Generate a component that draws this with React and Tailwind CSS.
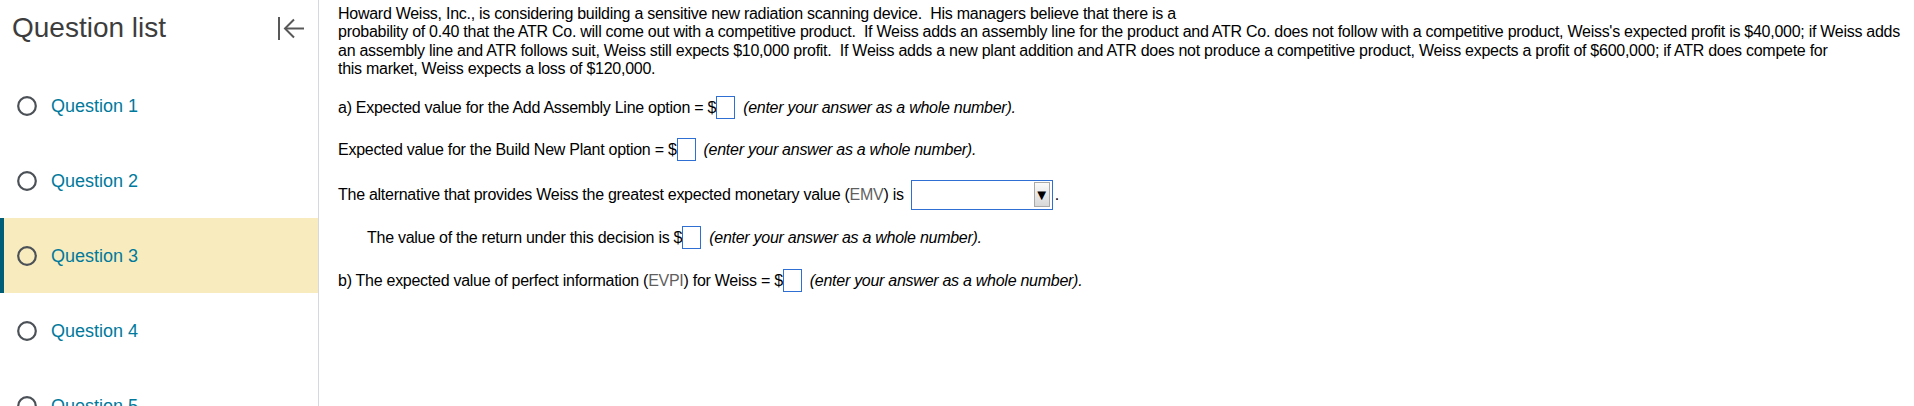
import React from "react";

const font = { fontFamily: '"Liberation Sans", Arial, sans-serif' };

function Circle() {
  return (
    <svg width="20" height="20" viewBox="0 0 20 20" className="shrink-0">
      <circle cx="10" cy="10" r="8.8" fill="none" stroke="#4b5157" strokeWidth="2.2" />
    </svg>
  );
}

function QItem({ label, active }) {
  return (
    <div
      className={
        "h-[75px] shrink-0 flex items-center pl-[17px] gap-[14px] relative " +
        (active ? "bg-[#f8ecbf]" : "")
      }
    >
      {active && <div className="absolute left-0 top-0 bottom-0 w-[4px] bg-[#005e78]" />}
      <Circle />
      <span className="text-[18px] text-[#00799c] leading-none">{label}</span>
    </div>
  );
}

function Box() {
  return <span className="inline-block w-[19px] h-[23px] border border-[#2f6ed3] bg-white shrink-0" />;
}

function Hint() {
  return <span className="italic ml-[8px]">(enter your answer as a whole number).</span>;
}

export default function App() {
  return (
    <div className="flex w-[1914px] h-[406px] overflow-hidden bg-white text-black" style={font}>
      <div className="w-[319px] shrink-0 border-r border-[#d3d9de] flex flex-col">
        <div className="h-[68px] shrink-0 flex items-start justify-between pl-[12px] pr-[13px] pt-[11px]">
          <span className="text-[28px] leading-[34px] text-[#3d3d3d]">Question list</span>
          <svg width="28" height="26" viewBox="0 0 28 26" className="mt-[5px]">
            <line x1="2" y1="1" x2="2" y2="24" stroke="#585858" strokeWidth="2" />
            <line x1="8" y1="12.5" x2="27" y2="12.5" stroke="#585858" strokeWidth="2" />
            <polyline points="17,3.5 8,12.5 17,21.5" fill="none" stroke="#585858" strokeWidth="2" />
          </svg>
        </div>
        <QItem label="Question 1" />
        <QItem label="Question 2" />
        <QItem label="Question 3" active />
        <QItem label="Question 4" />
        <QItem label="Question 5" />
      </div>
      <div className="flex-1 pl-[19px] pt-[5px] text-[16px] tracking-[-0.27px]">
        <div className="leading-[18.4px] whitespace-nowrap">
          <div>Howard Weiss, Inc., is considering building a sensitive new radiation scanning device.{"\u00a0 "}His managers believe that there is a</div>
          <div>probability of 0.40 that the ATR Co. will come out with a competitive product.{"\u00a0 "}If Weiss adds an assembly line for the product and ATR Co. does not follow with a competitive product, Weiss's expected profit is $40,000; if Weiss adds</div>
          <div>an assembly line and ATR follows suit, Weiss still expects $10,000 profit.{"\u00a0 "}If Weiss adds a new plant addition and ATR does not produce a competitive product, Weiss expects a profit of $600,000; if ATR does compete for</div>
          <div>this market, Weiss expects a loss of $120,000.</div>
        </div>

        <div className="mt-[17px] flex items-center whitespace-nowrap">
          <span>a) Expected value for the Add Assembly Line option = $</span>
          <Box />
          <Hint />
        </div>

        <div className="mt-[18px] flex items-center whitespace-nowrap">
          <span>Expected value for the Build New Plant option = $</span>
          <Box />
          <Hint />
        </div>

        <div className="mt-[18px] flex items-center whitespace-nowrap">
          <span>
            The alternative that provides Weiss the greatest expected monetary value (<span className="text-[#5f5f5f]">EMV</span>) is
          </span>
          <span className="ml-[7px] w-[142px] h-[30px] border border-[#2f6ed3] bg-white flex items-center justify-end pr-[2px]">
            <span className="w-[16px] h-[25px] border border-[#a9a9a9] bg-gradient-to-b from-[#fafafa] to-[#d8d8d8] flex items-center justify-center text-[15px] leading-none text-black tracking-normal">
              ▼
            </span>
          </span>
          <span className="ml-[2px]">.</span>
        </div>

        <div className="mt-[16px] ml-[29px] flex items-center whitespace-nowrap">
          <span>The value of the return under this decision is $</span>
          <Box />
          <Hint />
        </div>

        <div className="mt-[19px] flex items-center whitespace-nowrap">
          <span>
            b) The expected value of perfect information (<span className="text-[#5f5f5f]">EVPI</span>) for Weiss = $
          </span>
          <Box />
          <Hint />
        </div>
      </div>
    </div>
  );
}
